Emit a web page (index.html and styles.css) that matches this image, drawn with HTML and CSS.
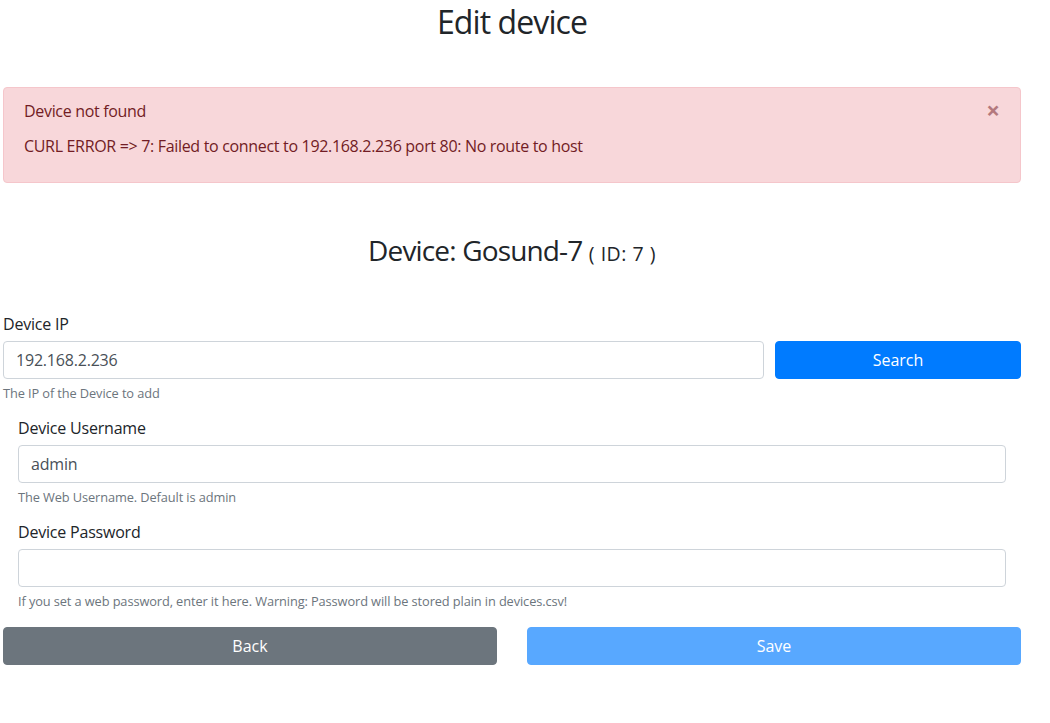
FILE: index.html
```html
<!DOCTYPE html>
<html lang="en">
<head>
<meta charset="utf-8">
<title>Edit device</title>
<link rel="stylesheet" href="styles.css">
</head>
<body>
<div class="page">
  <h1 class="title">Edit device</h1>

  <div class="alert" role="alert">
    <div class="alert-head">Device not found</div>
    <p class="alert-msg">CURL ERROR =&gt; 7: Failed to connect to 192.168.2.236 port 80: No route to host</p>
    <button type="button" class="close" aria-label="Close">×</button>
  </div>

  <h3 class="device-title">Device: Gosund-7 <small class="device-id">( ID: 7 )</small></h3>

  <form class="form">
    <div class="group">
      <label class="label" for="ip">Device IP</label>
      <div class="ip-row">
        <input class="input" id="ip" type="text" value="192.168.2.236">
        <button type="button" class="btn btn-primary search">Search</button>
      </div>
      <small class="help">The IP of the Device to add</small>
    </div>

    <div class="indent">
      <div class="group">
        <label class="label" for="user">Device Username</label>
        <input class="input" id="user" type="text" value="admin">
        <small class="help">The Web Username. Default is admin</small>
      </div>
      <div class="group">
        <label class="label" for="pass">Device Password</label>
        <input class="input" id="pass" type="password" value="">
        <small class="help">If you set a web password, enter it here. Warning: Password will be stored plain in devices.csv!</small>
      </div>
    </div>

    <div class="actions">
      <button type="button" class="btn btn-secondary">Back</button>
      <button type="button" class="btn btn-primary btn-disabled">Save</button>
    </div>
  </form>
</div>
</body>
</html>
```

FILE: styles.css
```css
* { box-sizing: border-box; }

html, body {
  margin: 0;
  padding: 0;
  background: #fff;
}

body {
  font-family: "Open Sans", "Noto Sans", "Liberation Sans", sans-serif;
  font-size: 16px;
  line-height: 1.5;
  color: #212529;
}

.page {
  width: 1018px;
  margin-left: 3px;
}

.title {
  margin: 3px 0 0;
  font-size: 32px;
  font-weight: 400;
  line-height: 1.2;
  text-align: center;
  letter-spacing: -0.9px;
}

.alert {
  position: relative;
  margin-top: 46px;
  padding: 11px 20px 12px;
  background: #f8d7da;
  border: 1px solid #f5c6cb;
  border-radius: 4px;
  color: #721c24;
  letter-spacing: -0.32px;
}

.alert-head {
  margin-bottom: 11px;
}

.alert-msg {
  margin: 0 0 12px;
}

.close {
  position: absolute;
  top: 0;
  right: 0;
  padding: 10px 20px 12px;
  background: transparent;
  border: 0;
  font-family: "Open Sans", sans-serif;
  font-size: 24px;
  font-weight: 700;
  line-height: 1;
  color: #721c24;
  opacity: 0.5;
  cursor: pointer;
}

.device-title {
  margin: 51px 0 0;
  font-size: 28px;
  font-weight: 400;
  line-height: 1.2;
  text-align: center;
  letter-spacing: -0.85px;
}

.device-id {
  font-size: 19.5px;
  letter-spacing: 0.5px;
  word-spacing: 0;
}

.form {
  margin-top: 44px;
}

.group {
  margin-bottom: 13px;
}

.label {
  display: block;
  margin-bottom: 5px;
  letter-spacing: -0.2px;
}

.input {
  display: block;
  width: 100%;
  height: 38px;
  padding: 6px 12px;
  font-family: inherit;
  font-size: 16px;
  line-height: 1.5;
  color: #495057;
  background: #fff;
  border: 1px solid #ced4da;
  border-radius: 4px;
  letter-spacing: -0.2px;
}

.ip-row {
  display: flex;
  gap: 11px;
}

.ip-row .input {
  flex: 1;
}

.search {
  width: 246px;
  flex: none;
}

.help {
  display: block;
  margin-top: 5px;
  font-size: 12.8px;
  line-height: 1.5;
  color: #6c757d;
  letter-spacing: -0.1px;
}

.indent {
  padding: 0 15px;
}

.btn {
  display: block;
  height: 38px;
  padding: 6px 12px;
  font-family: inherit;
  font-size: 16px;
  line-height: 1.5;
  text-align: center;
  border: 1px solid transparent;
  border-radius: 4px;
  color: #fff;
  cursor: pointer;
}

.btn-primary {
  background: #007bff;
  border-color: #007bff;
}

.btn-secondary {
  background: #6c757d;
  border-color: #6c757d;
}

.btn-disabled {
  opacity: 0.65;
}

.actions {
  display: grid;
  grid-template-columns: 1fr 1fr;
  gap: 30px;
  margin-top: 15px;
}
```
